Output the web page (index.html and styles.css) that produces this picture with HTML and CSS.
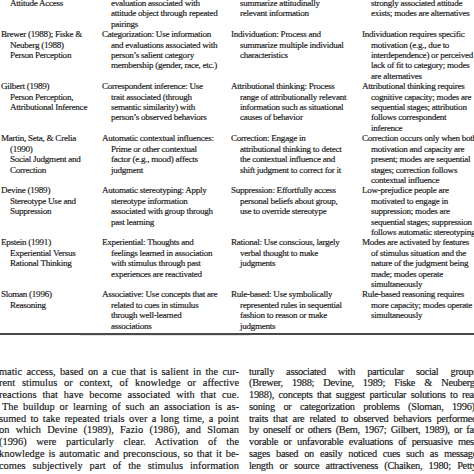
FILE: index.html
```html
<!DOCTYPE html>
<html>
<head>
<meta charset="utf-8">
<link rel="stylesheet" href="styles.css">
</head>
<body>
<div class="page">
  <div class="table">
    <div class="cell cont">Attitude Access</div>
    <div class="cell cont">evaluation associated with<br>attitude object through repeated<br>pairings</div>
    <div class="cell cont">summarize attitudinally<br>relevant information</div>
    <div class="cell cont">strongly associated attitude<br>exists; modes are alternatives</div>

    <div class="cell">Brewer (1988); Fiske &amp;<br>Neuberg (1988)<br>Person Perception</div>
    <div class="cell">Categorization: Use information<br>and evaluations associated with<br>person’s salient category<br>membership (gender, race, etc.)</div>
    <div class="cell">Individuation: Process and<br>summarize multiple individual<br>characteristics</div>
    <div class="cell">Individuation requires specific<br>motivation (e.g., due to<br>interdependence) or perceived<br>lack of fit to category; modes<br>are alternatives</div>

    <div class="cell">Gilbert (1989)<br>Person Perception,<br>Attributional Inference</div>
    <div class="cell">Correspondent inference: Use<br>trait associated (through<br>semantic similarity) with<br>person’s observed behaviors</div>
    <div class="cell">Attributional thinking: Process<br>range of attributionally relevant<br>information such as situational<br>causes of behavior</div>
    <div class="cell">Attributional thinking requires<br>cognitive capacity; modes are<br>sequential stages; attribution<br>follows correspondent<br>inference</div>

    <div class="cell">Martin, Seta, &amp; Crelia<br>(1990)<br>Social Judgment and<br>Correction</div>
    <div class="cell">Automatic contextual influences:<br>Prime or other contextual<br>factor (e.g., mood) affects<br>judgment</div>
    <div class="cell">Correction: Engage in<br>attributional thinking to detect<br>the contextual influence and<br>shift judgment to correct for it</div>
    <div class="cell">Correction occurs only when both<br>motivation and capacity are<br>present; modes are sequential<br>stages; correction follows<br>contextual influence</div>

    <div class="cell">Devine (1989)<br>Stereotype Use and<br>Suppression</div>
    <div class="cell">Automatic stereotyping: Apply<br>stereotype information<br>associated with group through<br>past learning</div>
    <div class="cell">Suppression: Effortfully access<br>personal beliefs about group,<br>use to override stereotype</div>
    <div class="cell">Low-prejudice people are<br>motivated to engage in<br>suppression; modes are<br>sequential stages; suppression<br>follows automatic stereotyping</div>

    <div class="cell">Epstein (1991)<br>Experiential Versus<br>Rational Thinking</div>
    <div class="cell">Experiential: Thoughts and<br>feelings learned in association<br>with stimulus through past<br>experiences are reactivated</div>
    <div class="cell">Rational: Use conscious, largely<br>verbal thought to make<br>judgments</div>
    <div class="cell">Modes are activated by features<br>of stimulus situation and the<br>nature of the judgment being<br>made; modes operate<br>simultaneously</div>

    <div class="cell">Sloman (1996)<br>Reasoning</div>
    <div class="cell">Associative: Use concepts that are<br>related to cues in stimulus<br>through well-learned<br>associations</div>
    <div class="cell">Rule-based: Use symbolically<br>represented rules in sequential<br>fashion to reason or make<br>judgments</div>
    <div class="cell">Rule-based reasoning requires<br>more capacity; modes operate<br>simultaneously</div>
  </div>
  <div class="rule"></div>
  <div class="smudge"></div>
  <div class="body">
    <div class="col left">
      <div class="ln">matic access, based on a cue that is salient in the cur-</div>
      <div class="ln">rent stimulus or context, of knowledge or affective</div>
      <div class="ln">reactions that have become associated with that cue.</div>
      <div class="ln ind">The buildup or learning of such an association is as-</div>
      <div class="ln">sumed to take repeated trials over a long time, a point</div>
      <div class="ln">on which Devine (1989), Fazio (1986), and Sloman</div>
      <div class="ln">(1996) were particularly clear. Activation of the</div>
      <div class="ln">knowledge is automatic and preconscious, so that it be-</div>
      <div class="ln">comes subjectively part of the stimulus information</div>
    </div>
    <div class="col right">
      <div class="ln">turally associated with particular social groups</div>
      <div class="ln">(Brewer, 1988; Devine, 1989; Fiske &amp; Neuberg,</div>
      <div class="ln">1988), concepts that suggest particular solutions to rea-</div>
      <div class="ln">soning or categorization problems (Sloman, 1996),</div>
      <div class="ln">traits that are related to observed behaviors performed</div>
      <div class="ln">by oneself or others (Bem, 1967; Gilbert, 1989), or fa-</div>
      <div class="ln">vorable or unfavorable evaluations of persuasive mes-</div>
      <div class="ln">sages based on easily noticed cues such as message</div>
      <div class="ln">length or source attractiveness (Chaiken, 1980; Petty</div>
    </div>
  </div>
</div>
</body>
</html>
```
FILE: styles.css
```css
html, body {
  margin: 0;
  padding: 0;
  background: #ffffff;
}
body {
  width: 474px;
  height: 474px;
  overflow: hidden;
  font-family: "Liberation Serif", "Times New Roman", serif;
  color: #161616;
  -webkit-text-stroke: 0.15px #161616;
}
.page {
  width: 474px;
  overflow: hidden;
}
.table {
  display: grid;
  grid-template-columns: 101px 129px 131px 140px;
  margin-top: -2px;
  padding-left: 1px;
  font-size: 9.1px;
  line-height: 10.4px;
  letter-spacing: -0.28px;
  white-space: nowrap;
}
.cell {
  padding-left: 9px;
  text-indent: -9px;
}
.cell.cont {
  text-indent: 0;
}
.rule {
  margin-top: 2px;
  height: 1.5px;
  background: #4a4a4a;
}
.smudge {
  margin-left: 80px;
  width: 170px;
  height: 1px;
  background: #e4e4e4;
}
.body {
  display: grid;
  grid-template-columns: 240px 228px;
  column-gap: 10px;
  margin-top: 30px;
  margin-left: -1px;
  font-size: 10.4px;
  line-height: 11.75px;
  white-space: nowrap;
}
.ln {
  text-align: justify;
  text-align-last: justify;
  white-space: normal;
}
.right .ln {
  letter-spacing: -0.3px;
}
.ln.ind {
  padding-left: 3px;
}
```
